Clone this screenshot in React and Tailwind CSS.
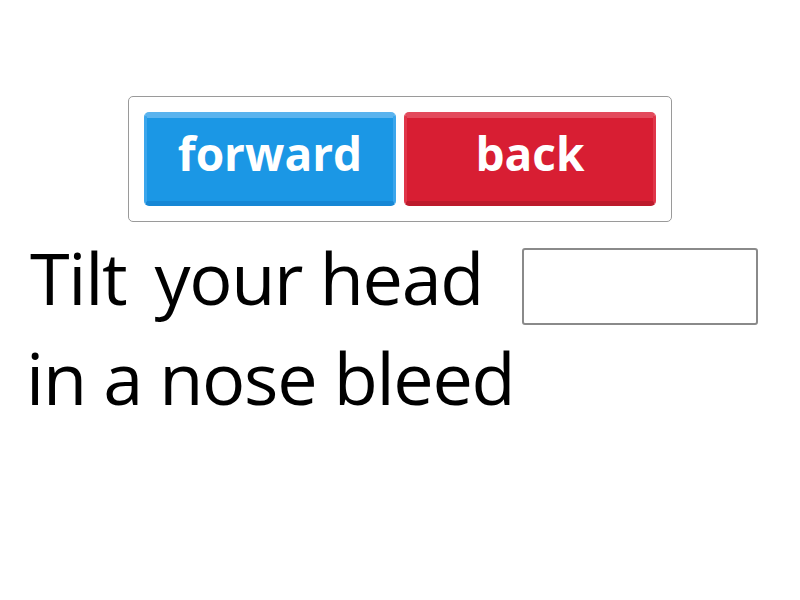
export default function App() {
  return (
    <div className="w-[800px] h-[600px] bg-white" style={{ fontFamily: '"Open Sans", sans-serif' }}>
      <div className="pt-[96px] flex justify-center">
        <div className="w-[544px] h-[126px] border border-[#9a9a9a] rounded-[5px] flex items-center justify-center gap-[8px]">
          <div className="w-[252px] h-[94px] rounded-[5px] bg-[#1b97e5] border-t-[6px] border-x-[3px] border-b-[5px] border-t-[#5ab3ee] border-x-[#3ba6ec] border-b-[#1687d5] flex items-center justify-center text-white font-bold text-[46px] leading-none pb-[13px]">
            forward
          </div>
          <div className="w-[252px] h-[94px] rounded-[5px] bg-[#d81e33] border-t-[6px] border-x-[3px] border-b-[5px] border-t-[#e34a5c] border-x-[#e0364a] border-b-[#bd1a2c] flex items-center justify-center text-white font-bold text-[46px] leading-none pb-[13px]">
            back
          </div>
        </div>
      </div>
      <div className="mt-[5px] pl-[26px] text-[72px] leading-[100px] text-black tracking-[-1.3px]">
        <div className="flex items-center">
          <span className="pl-[4px]">Tilt</span>
          <span className="ml-[28px]">your head</span>
          <div className="ml-[39px] mt-[18px] w-[236px] h-[77px] border-2 border-[#8a8a8a] rounded-[3px]"></div>
        </div>
        <div>in a nose bleed</div>
      </div>
    </div>
  );
}
